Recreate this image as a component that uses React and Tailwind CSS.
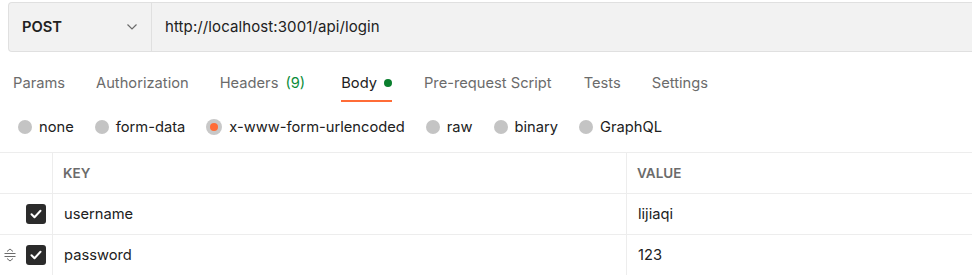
import React from 'react';

const tabs = [
  { label: 'Params', gap: '' },
  { label: 'Authorization', gap: 'ml-[31px]' },
  { label: 'Headers', count: '(9)', gap: 'ml-[31px]' },
  { label: 'Body', active: true, gap: 'ml-[36px]' },
  { label: 'Pre-request Script', gap: 'ml-[32px]' },
  { label: 'Tests', gap: 'ml-[32px]' },
  { label: 'Settings', gap: 'ml-[31px]' },
];

const bodyTypes = ['none', 'form-data', 'x-www-form-urlencoded', 'raw', 'binary', 'GraphQL'];

const rows = [
  { key: 'username', value: 'lijiaqi' },
  { key: 'password', value: '123', handle: true },
];

function Checkbox() {
  return (
    <div className="w-5 h-5 rounded-[3px] bg-[#2b2b2b] flex items-center justify-center">
      <svg width="12" height="10" viewBox="0 0 12 10" fill="none">
        <path d="M1.5 5.2 4.5 8.2 10.5 1.8" stroke="white" strokeWidth="2" strokeLinecap="round" strokeLinejoin="round" />
      </svg>
    </div>
  );
}

function DragHandle() {
  return (
    <svg width="12" height="14" viewBox="0 0 12 14" fill="none" stroke="#6b6b6b" strokeWidth="1">
      <path d="M3 3.5 6 1 9 3.5" />
      <path d="M0.5 5.5h11M0.5 8.5h11" />
      <path d="M3 10.5 6 13 9 10.5" />
    </svg>
  );
}

export default function App() {
  return (
    <div className="w-[972px] h-[275px] bg-white overflow-hidden font-['Inter',sans-serif] text-[14.7px]">
      <div className="pt-[2px] pl-2">
        <div className="flex h-[50px] bg-[#f2f2f2] border border-[#e0e0e0] border-r-0 rounded-l-[4px]">
          <div className="w-[143px] flex items-center justify-between pl-[13px] pr-[13px] border-r border-[#e0e0e0]">
            <span className="font-semibold text-[#212121]">POST</span>
            <svg width="12" height="8" viewBox="0 0 12 8" fill="none" stroke="#6b6b6b" strokeWidth="1.2">
              <path d="M1.5 1.5 6 6 10.5 1.5" />
            </svg>
          </div>
          <div className="flex items-center pl-[13px] text-[#212121] text-[15px] tracking-[0.1px]">http://localhost:3001/api/login</div>
        </div>
      </div>

      <div className="flex pl-[13px] h-[51px] pt-[20px]">
        {tabs.map((t) => (
          <div key={t.label} className={`flex flex-col ${t.gap}`}>
            <div className={`flex items-center h-[22px] ${t.active ? 'text-[#212121]' : 'text-[#6b6b6b]'}`}>
              <span>{t.label}</span>
              {t.count && <span className="text-[#0a8c3a] ml-[7px]">{t.count}</span>}
              {t.active && <span className="w-2 h-2 rounded-full bg-[#0a7f2e] ml-[7px]" />}
            </div>
            {t.active && <div className="h-[2px] bg-[#ff6c37] mt-[6px]" />}
          </div>
        ))}
      </div>

      <div className="flex items-center gap-[21px] pl-[18px] h-[49px]">
        {bodyTypes.map((b) => (
          <div key={b} className="flex items-center gap-[7px]">
            {b === 'x-www-form-urlencoded' ? (
              <span className="w-4 h-4 rounded-full bg-[#c8c8c8] flex items-center justify-center">
                <span className="w-2 h-2 rounded-full bg-[#ff6c37]" />
              </span>
            ) : (
              <span className="w-[14px] h-[14px] rounded-full bg-[#c4c4c4]" />
            )}
            <span className="text-[#212121]">{b}</span>
          </div>
        ))}
      </div>

      <div className="border-t border-[#ededed]">
        <div className="grid grid-cols-[53px_574px_1fr] h-[41px] border-b border-[#ededed]">
          <div className="border-r border-[#ededed]" />
          <div className="border-r border-[#ededed] flex items-center pl-[10px] text-[13.5px] font-semibold text-[#6b6b6b]">KEY</div>
          <div className="flex items-center pl-[10px] text-[13.5px] font-semibold text-[#6b6b6b]">VALUE</div>
        </div>
        {rows.map((r) => (
          <div key={r.key} className="grid grid-cols-[53px_574px_1fr] h-[41px] border-b border-[#ededed]">
            <div className="border-r border-[#ededed] flex items-center justify-end pr-[6px] gap-[10px]">
              {r.handle && <DragHandle />}
              <Checkbox />
            </div>
            <div className="border-r border-[#ededed] flex items-center pl-[11px] text-[#212121]">{r.key}</div>
            <div className="flex items-center pl-[11px] text-[#212121]">{r.value}</div>
          </div>
        ))}
      </div>
    </div>
  );
}
